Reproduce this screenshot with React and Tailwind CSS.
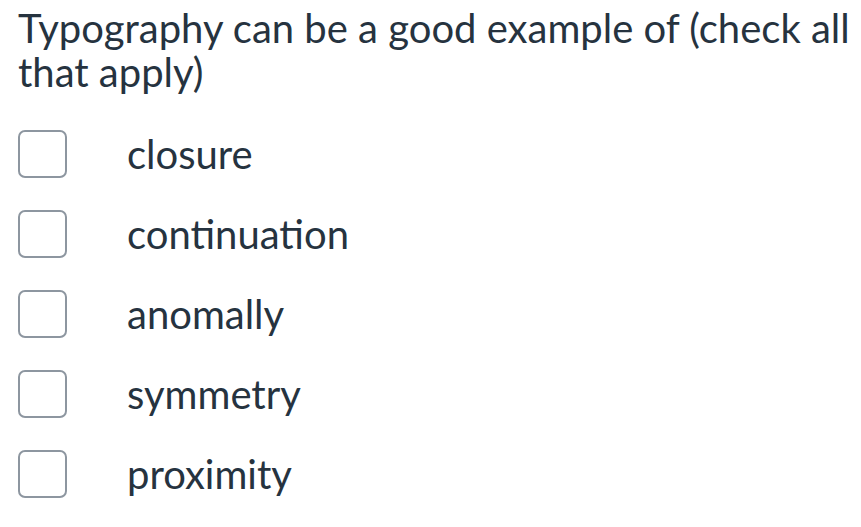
import React from "react";

const options = ["closure", "continuation", "anomally", "symmetry", "proximity"];

export default function App() {
  return (
    <main className="min-h-screen bg-white text-[#26333f] font-['Lato',sans-serif]">
      <div className="pl-[18px] pt-[6px]">
        <h2 className="text-[40px] leading-[44px] font-normal">
          Typography can be a good example of (check all that apply)
        </h2>
        <div className="mt-[36px] flex flex-col gap-[32px]">
          {options.map((opt) => (
            <label key={opt} className="flex items-center h-[48px]">
              <span className="w-[49px] h-[48px] rounded-[7px] border-2 border-[#8d96a0] bg-white shrink-0" />
              <span className="ml-[60px] text-[40px] leading-[48px]">{opt}</span>
            </label>
          ))}
        </div>
      </div>
    </main>
  );
}
